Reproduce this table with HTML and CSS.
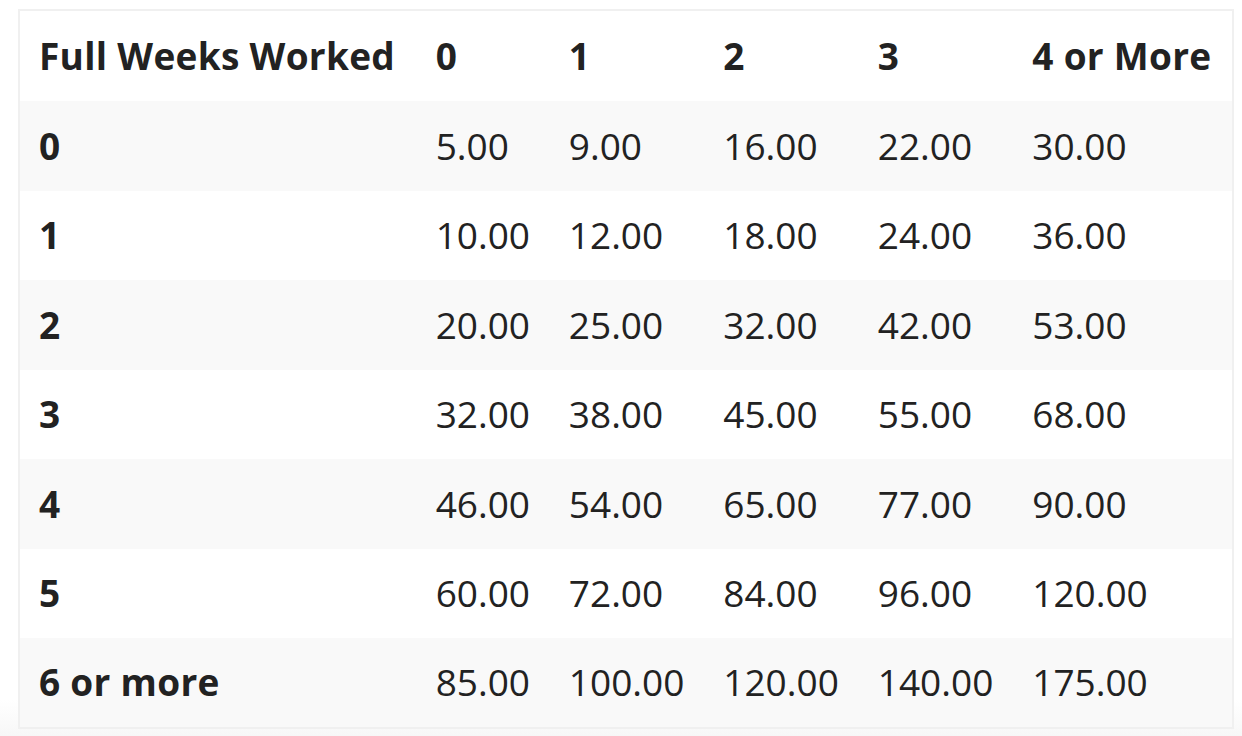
FILE: index.html
```html
<!DOCTYPE html>
<html>
<head>
<meta charset="utf-8">
<link rel="stylesheet" href="styles.css">
</head>
<body>
<div class="wrap">
<table class="rates">
  <thead>
    <tr><th>Full Weeks Worked</th><th>0</th><th>1</th><th>2</th><th>3</th><th>4 or More</th></tr>
  </thead>
  <tbody>
    <tr><th>0</th><td>5.00</td><td>9.00</td><td>16.00</td><td>22.00</td><td>30.00</td></tr>
    <tr><th>1</th><td>10.00</td><td>12.00</td><td>18.00</td><td>24.00</td><td>36.00</td></tr>
    <tr><th>2</th><td>20.00</td><td>25.00</td><td>32.00</td><td>42.00</td><td>53.00</td></tr>
    <tr><th>3</th><td>32.00</td><td>38.00</td><td>45.00</td><td>55.00</td><td>68.00</td></tr>
    <tr><th>4</th><td>46.00</td><td>54.00</td><td>65.00</td><td>77.00</td><td>90.00</td></tr>
    <tr><th>5</th><td>60.00</td><td>72.00</td><td>84.00</td><td>96.00</td><td>120.00</td></tr>
    <tr><th>6 or more</th><td>85.00</td><td>100.00</td><td>120.00</td><td>140.00</td><td>175.00</td></tr>
  </tbody>
</table>
</div>
</body>
</html>
```
FILE: styles.css
```css
html, body {
  margin: 0;
  padding: 0;
  background: #ffffff;
}
body {
  height: 736px;
  background: linear-gradient(to bottom, #ffffff 0, #ffffff 700px, #f7f7f7 736px);
}
.wrap {
  padding: 9px 8px 0 18px;
}
.rates {
  width: 100%;
  border-collapse: collapse;
  border: 2px solid #f0f0f0;
  font-family: "Open Sans", "Liberation Sans", sans-serif;
  font-size: 37px;
  color: #222222;
  background: #ffffff;
}
.rates th,
.rates td {
  text-align: left;
  padding: 0 19px;
  line-height: 52px;
  vertical-align: middle;
  white-space: nowrap;
}
.rates tbody tr {
  height: 89.5px;
}
.rates thead tr {
  height: 91px;
}
.rates th {
  font-weight: 700;
  letter-spacing: 0.3px;
}
.rates td {
  font-weight: 400;
}
.rates tbody tr:nth-child(odd) {
  background: #f9f9f9;
}
```
